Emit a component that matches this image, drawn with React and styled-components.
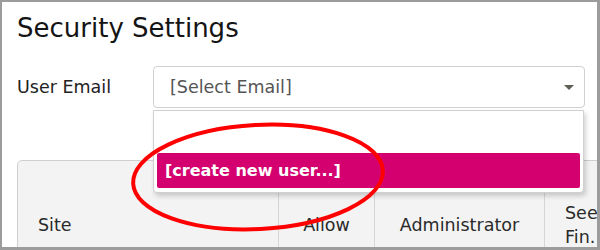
import React from 'react';
import styled, { createGlobalStyle } from 'styled-components';

const GlobalStyle = createGlobalStyle`
  body {
    margin: 0;
    background: #fff;
    font-family: "DejaVu Sans", "Noto Sans", sans-serif;
  }
`;

const Frame = styled.div`
  position: relative;
  width: 600px;
  height: 250px;
  box-sizing: border-box;
  border: 2px solid #9c9c9c;
  border-right-width: 3px;
  border-bottom-width: 3px;
  overflow: hidden;
  padding: 10px 0 0 15px;
`;

const Title = styled.h1`
  margin: 0;
  font-size: 26px;
  line-height: 32px;
  font-weight: 500;
  color: #141414;
`;

const FieldRow = styled.div`
  display: flex;
  align-items: center;
  margin-top: 22px;
`;

const Label = styled.label`
  width: 136px;
  font-size: 17.5px;
  color: #222;
`;

const SelectWrap = styled.div`
  position: relative;
  width: 432px;
`;

const SelectBox = styled.div`
  display: flex;
  align-items: center;
  justify-content: space-between;
  height: 42px;
  box-sizing: border-box;
  padding: 0 10px 0 16px;
  border: 1px solid #d0d0d0;
  border-radius: 4px;
  background: #fff;
  font-size: 17.5px;
  color: #555;
`;

const Caret = styled.span`
  width: 0;
  height: 0;
  border-left: 5px solid transparent;
  border-right: 5px solid transparent;
  border-top: 5px solid #5f5f55;
`;

const Menu = styled.div`
  position: absolute;
  top: 44px;
  left: 0;
  width: 431px;
  height: 83px;
  box-sizing: border-box;
  padding: 42px 3px 0 3px;
  background: #fff;
  border: 1px solid #d0d0d0;
  border-radius: 0 0 4px 4px;
  box-shadow: 2px 3px 5px rgba(0, 0, 0, 0.18);
  z-index: 2;
`;

const Option = styled.div`
  display: flex;
  align-items: center;
  height: 35px;
  padding: 0 8px;
  border-radius: 2px;
  background: ${(p) => (p.$active ? '#d4006f' : 'transparent')};
  color: ${(p) => (p.$active ? '#fff' : '#333')};
  font-size: 16px;
  font-weight: 600;
`;

const Table = styled.div`
  display: grid;
  grid-template-columns: 260px 96px 170px 100px;
  width: 626px;
  margin-top: 52px;
  background: #f3f3f3;
  border: 1px solid #cfcfcf;
  border-radius: 5px 5px 0 0;
`;

const HeadCell = styled.div`
  display: flex;
  align-items: center;
  justify-content: ${(p) => (p.$left ? 'flex-start' : 'center')};
  height: 90px;
  padding: 38px ${(p) => (p.$left ? '20px' : '0')} 0;
  box-sizing: border-box;
  border-left: ${(p) => (p.$first ? 'none' : '1px solid #d6d6d6')};
  font-size: 17.5px;
  line-height: 24px;
  color: #2a2a2a;
  text-align: ${(p) => (p.$left ? 'left' : 'center')};
`;

const Circle = styled.svg`
  position: absolute;
  left: 0;
  top: 0;
  pointer-events: none;
  z-index: 3;
`;

export default function App() {
  return (
    <>
      <GlobalStyle />
      <Frame>
        <Title>Security Settings</Title>
        <FieldRow>
          <Label>User Email</Label>
          <SelectWrap>
            <SelectBox>
              <span>[Select Email]</span>
              <Caret />
            </SelectBox>
            <Menu>
              <Option $active>[create new user...]</Option>
            </Menu>
          </SelectWrap>
        </FieldRow>
        <Table>
          <HeadCell $first $left>Site</HeadCell>
          <HeadCell>Allow</HeadCell>
          <HeadCell>Administrator</HeadCell>
          <HeadCell $left>See<br />Fin.</HeadCell>
        </Table>
        <Circle width="600" height="250" viewBox="0 0 600 250">
          <ellipse
            cx="256"
            cy="175"
            rx="125"
            ry="52"
            transform="rotate(-3 256 175)"
            fill="none"
            stroke="#f00"
            strokeWidth="4"
          />
        </Circle>
      </Frame>
    </>
  );
}
